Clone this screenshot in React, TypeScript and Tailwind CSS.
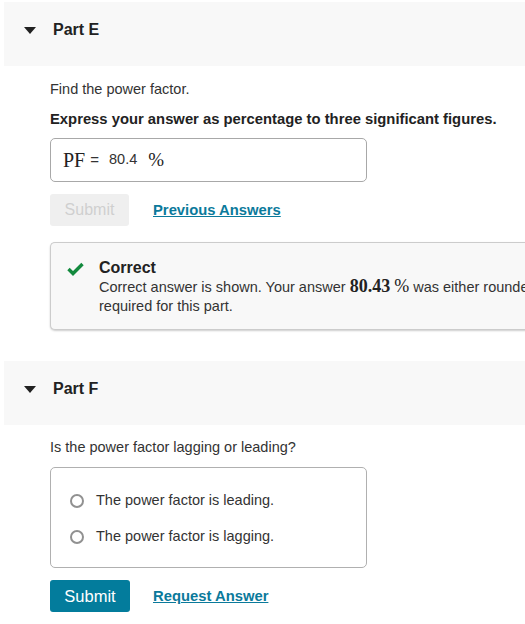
import React from "react";

function Tri() {
  return (
    <svg width="12" height="7" viewBox="0 0 12 7" className="shrink-0">
      <path d="M0 0 L12 0 L6 7 Z" fill="#222" />
    </svg>
  );
}

function Header({ label }: { label: string }) {
  return (
    <div className="ml-[4px] h-[64px] bg-[#f8f8f8] flex items-center pb-[8px]">
      <div className="w-[49px] flex justify-end pr-[17px]">
        <Tri />
      </div>
      <div className="text-[16px] font-bold text-[#222]">{label}</div>
    </div>
  );
}

function Radio({ label }: { label: string }) {
  return (
    <div className="flex items-center h-[20px]">
      <span className="w-[14px] h-[14px] rounded-full border-2 border-[#919191] bg-white shrink-0" />
      <span className="ml-[12px] text-[14.5px] text-[#333]">{label}</span>
    </div>
  );
}

export default function App() {
  return (
    <div
      className="w-[525px] h-[624px] overflow-hidden bg-white text-[#333]"
      style={{ fontFamily: '"Liberation Sans", Arial, sans-serif' }}
    >
      <div className="pt-[2px]">
        <Header label="Part E" />
      </div>
      <div className="pl-[50px]">
        <div className="mt-[14px] text-[14.5px] leading-[18px]">Find the power factor.</div>
        <div className="mt-[12px] text-[14.8px] leading-[18px] font-bold text-[#222]">
          Express your answer as percentage to three significant figures.
        </div>
        <div className="mt-[10px] w-[317px] h-[44px] rounded-[5px] border border-[#a8a8a8] flex items-center pl-[12px]">
          <span className="text-[20px] text-[#222]" style={{ fontFamily: '"Liberation Serif", serif' }}>PF</span>
          <span className="text-[15px] ml-[5px]">=</span>
          <span className="text-[14.5px] ml-[10px]">80.4</span>
          <span className="text-[19px] ml-[11px] text-[#222]" style={{ fontFamily: '"Liberation Serif", serif' }}>%</span>
        </div>
        <div className="mt-[12px] flex items-center">
          <div className="w-[79px] h-[32px] rounded-[3px] bg-[#efefef] text-[#cfcfcf] text-[16px] flex items-center justify-center">
            Submit
          </div>
          <a className="ml-[24px] text-[14.8px] font-bold text-[#0b7a9b] underline">Previous Answers</a>
        </div>
        <div className="mt-[16px] w-[500px] h-[88px] overflow-hidden rounded-l-[5px] border border-[#cccccc] border-r-0 bg-[#f8f8f8] shadow-[0_1px_2px_rgba(0,0,0,0.2)] flex pt-[16px] pl-[16px]">
          <svg width="17" height="14" viewBox="0 0 17 14" className="mt-[3px] shrink-0">
            <path d="M1.5 7 L6 11.5 L15.5 2" stroke="#138a3e" strokeWidth="3.4" fill="none" strokeLinecap="butt" />
          </svg>
          <div className="ml-[15px] min-w-0">
            <div className="text-[16px] font-bold text-[#222] leading-[18px]">Correct</div>
            <div className="text-[14.5px] leading-[19px] whitespace-nowrap">
              Correct answer is shown. Your answer{" "}
              <span className="text-[18px] font-bold text-[#222]" style={{ fontFamily: '"Liberation Serif", serif' }}>
                80.43
              </span>{" "}
              <span className="text-[18px] text-[#222]" style={{ fontFamily: '"Liberation Serif", serif' }}>%</span>{" "}
              was either rounded differently
            </div>
            <div className="text-[14.5px] leading-[19px]">required for this part.</div>
          </div>
        </div>
      </div>
      <div className="mt-[31px]">
        <Header label="Part F" />
      </div>
      <div className="pl-[50px]">
        <div className="mt-[13px] text-[14.5px] leading-[18px]">Is the power factor lagging or leading?</div>
        <div className="mt-[11px] w-[317px] h-[101px] rounded-[5px] border border-[#b0b0b0] flex flex-col justify-center gap-[16px] pl-[19px] pt-[3px]">
          <Radio label="The power factor is leading." />
          <Radio label="The power factor is lagging." />
        </div>
        <div className="mt-[12px] flex items-center">
          <div className="w-[80px] h-[32px] rounded-[3px] bg-[#037c9c] text-white text-[16.5px] flex items-center justify-center">
            Submit
          </div>
          <a className="ml-[23px] text-[14.8px] font-bold text-[#0b7a9b] underline">Request Answer</a>
        </div>
      </div>
    </div>
  );
}
